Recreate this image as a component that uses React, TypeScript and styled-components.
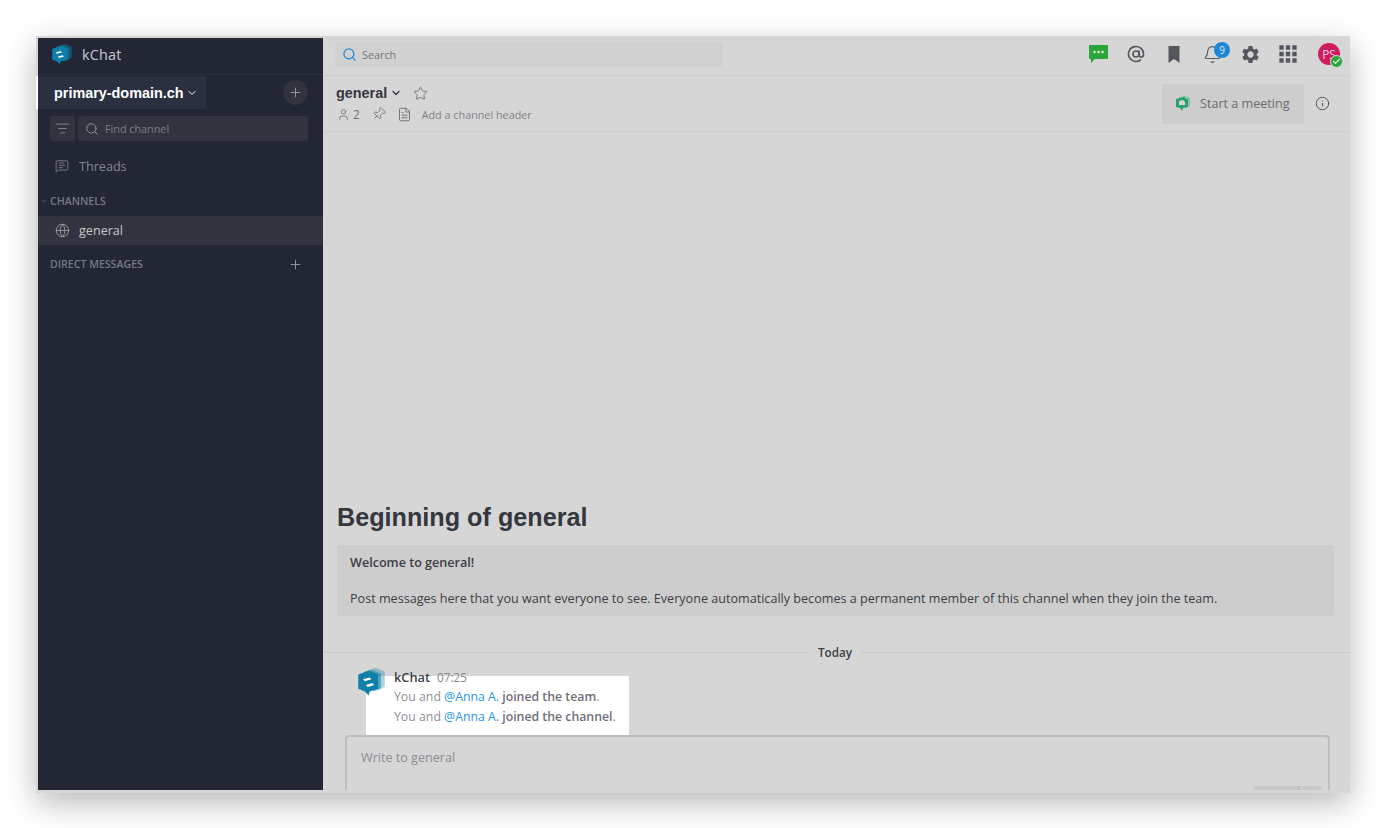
import React from "react";
import styled, { createGlobalStyle } from "styled-components";
import {
  AtSign,
  Bell,
  Check,
  ChevronDown,
  FileText,
  Globe,
  Info,
  ListFilter,
  MessageSquareText,
  Pin,
  Plus,
  Search,
  Star,
  User,
} from "lucide-react";
import { MdApps, MdSettings } from "react-icons/md";

const GlobalStyle = createGlobalStyle`
  html, body {
    margin: 0;
    background: #ffffff;
    overflow: hidden;
  }
  body {
    font-family: "Open Sans", "Noto Sans", sans-serif;
  }
`;

function KChatLogo({ size, layers }: { size: number; layers?: boolean }) {
  return (
    <svg width={size} height={size * 1.05} viewBox="0 0 28 30">
      <path d="M10 2 L19 0 L28 4 L28 20 L20 23 Z" fill="#0f7ea8" opacity={layers ? 0.35 : 0.45} />
      <path d="M6 4 L15 2 L24 6 L24 22 L16 25 Z" fill="#0f7ea8" opacity={layers ? 0.55 : 0.7} />
      <path d="M0 7 L11 3 L21 7 L21 22 L12 25 L11 29 L7 25 L0 22 Z" fill="#0f7ea8" />
      <path d="M5 12 L12 10 L14 12 L7 14 Z" fill="#ffffff" />
      <path d="M8 18 L15 16 L17 18 L10 20 Z" fill="#ffffff" />
    </svg>
  );
}

function MeetIcon() {
  return (
    <svg width="14" height="15" viewBox="0 0 14 15">
      <path d="M3 1 L9 0 L14 2 L14 10 L10 12 Z" fill="#7cc4a2" />
      <path d="M0 3 L7 1 L12 4 L12 11 L7 12 L6 15 L4 12 L0 11 Z" fill="#2f9e6e" />
      <path d="M3 5 L7 4 L9 6 L9 9 L3 9 Z" fill="#d6d6d6" />
    </svg>
  );
}

function GreenChat() {
  return (
    <svg width="19" height="18" viewBox="0 0 19 18">
      <path d="M1 0 H18 a1 1 0 0 1 1 1 V13 a1 1 0 0 1 -1 1 H6 L2 18 V14 H1 a1 1 0 0 1 -1 -1 V1 a1 1 0 0 1 1 -1 Z" fill="#2ea53c" />
      <circle cx="5.5" cy="7" r="1.2" fill="#e4f3e4" />
      <circle cx="9.5" cy="7" r="1.2" fill="#e4f3e4" />
      <circle cx="13.5" cy="7" r="1.2" fill="#e4f3e4" />
    </svg>
  );
}

function BookmarkIcon() {
  return (
    <svg width="12" height="17" viewBox="0 0 12 17">
      <path d="M0.5 0 H11.5 V17 L6 13 L0.5 17 Z" fill="#55575f" />
    </svg>
  );
}

export default function App() {
  return (
    <>
      <GlobalStyle />
      <Page>
        <Window>
          <Sidebar>
            <Brand>
              <KChatLogo size={20} />
              <BrandName>kChat</BrandName>
            </Brand>
            <TeamRow>
              <TeamName>
                primary-domain.ch
                <ChevronDown size={12} strokeWidth={2} />
              </TeamName>
              <RoundButton>
                <Plus size={15} strokeWidth={1.5} />
              </RoundButton>
            </TeamRow>
            <FilterRow>
              <FilterButton>
                <ListFilter size={15} strokeWidth={1.5} />
              </FilterButton>
              <FindChannel>
                <Search size={14} strokeWidth={1.6} />
                Find channel
              </FindChannel>
            </FilterRow>
            <NavItem>
              <MessageSquareText size={14} strokeWidth={1.5} />
              Threads
            </NavItem>
            <SectionLabel>
              <ChevronDown size={8} strokeWidth={2} />
              CHANNELS
            </SectionLabel>
            <ChannelItem>
              <Globe size={15} strokeWidth={1.5} />
              general
            </ChannelItem>
            <DirectLabel>
              DIRECT MESSAGES
              <Plus size={15} strokeWidth={1.5} />
            </DirectLabel>
          </Sidebar>
          <Main>
            <TopBar>
              <SearchBox>
                <Search size={15} strokeWidth={2} color="#1c87d6" />
                Search
              </SearchBox>
              <TopIcons>
                <TopIcon>
                  <GreenChat />
                </TopIcon>
                <TopIcon>
                  <AtSign size={18} strokeWidth={2.2} />
                </TopIcon>
                <TopIcon>
                  <BookmarkIcon />
                </TopIcon>
                <TopIcon>
                  <Bell size={19} strokeWidth={1.4} />
                  <Badge>9</Badge>
                </TopIcon>
                <TopIcon>
                  <MdSettings size={21} />
                </TopIcon>
                <TopIcon>
                  <MdApps size={26} />
                </TopIcon>
                <Avatar>
                  PS
                  <StatusDot>
                    <Check size={9} strokeWidth={3} />
                  </StatusDot>
                </Avatar>
              </TopIcons>
            </TopBar>
            <ChannelHeader>
              <ChannelInfo>
                <ChannelTitle>
                  general
                  <ChevronDown size={12} strokeWidth={2.4} />
                  <Star size={15} strokeWidth={1.4} color="#6b6d74" />
                </ChannelTitle>
                <ChannelMeta>
                  <MetaItem>
                    <User size={13} strokeWidth={1.5} />2
                  </MetaItem>
                  <TiltedPin size={14} strokeWidth={1.5} />
                  <FileText size={15} strokeWidth={1.5} />
                  <HeaderHint>Add a channel header</HeaderHint>
                </ChannelMeta>
              </ChannelInfo>
              <MeetingButton>
                <MeetIcon />
                Start a meeting
              </MeetingButton>
              <InfoButton>
                <Info size={15} strokeWidth={1.5} />
              </InfoButton>
            </ChannelHeader>
            <Feed>
              <Beginning>Beginning of general</Beginning>
              <IntroBox>
                <strong>Welcome to general!</strong>
                <p>Post messages here that you want everyone to see. Everyone automatically becomes a permanent member of this channel when they join the team.</p>
              </IntroBox>
              <DateDivider>
                <span>Today</span>
              </DateDivider>
              <Message>
                <Spotlight />
                <MessageAvatar>
                  <KChatLogo size={27} layers />
                </MessageAvatar>
                <MessageBody>
                  <MessageHead>
                    <b>kChat</b>
                    <time>07:25</time>
                  </MessageHead>
                  <SystemLine>
                    You and <a>@Anna A.</a> <em>joined the team</em>.
                  </SystemLine>
                  <SystemLine>
                    You and <a>@Anna A.</a> <em>joined the channel</em>.
                  </SystemLine>
                </MessageBody>
              </Message>
            </Feed>
            <Composer>
              <Placeholder>Write to general</Placeholder>
              <ComposerActions>
                <SendGroup />
              </ComposerActions>
            </Composer>
          </Main>
        </Window>
      </Page>
    </>
  );
}

const Page = styled.div`
  width: 1385px;
  height: 828px;
  padding: 36px 0 0 36px;
  box-sizing: border-box;
`;

const Window = styled.div`
  width: 1314px;
  height: 757px;
  box-sizing: border-box;
  padding: 2px 0 3px 2px;
  display: flex;
  background: #d6d6d6;
  box-shadow: 0 10px 30px rgba(0, 0, 0, 0.28);
`;

const Sidebar = styled.aside`
  width: 285px;
  flex: none;
  background: #232735;
  display: flex;
  flex-direction: column;
`;

const Brand = styled.div`
  height: 37px;
  box-sizing: border-box;
  border-bottom: 1px solid #2c303d;
  display: flex;
  align-items: center;
  gap: 10px;
  padding: 0 14px 3px;
`;

const BrandName = styled.span`
  color: #c9cacd;
  font-size: 14.4px;
  letter-spacing: 0.2px;
`;

const TeamRow = styled.div`
  height: 33px;
  margin-top: 1px;
  display: flex;
  align-items: center;
  justify-content: space-between;
  padding-right: 15px;
`;

const TeamName = styled.div`
  width: 170px;
  height: 33px;
  margin-left: -2px;
  box-sizing: border-box;
  padding-left: 16px;
  display: flex;
  align-items: center;
  gap: 2px;
  background: #2a3040;
  border-left: 2px solid #ffffff;
  color: #ffffff;
  white-space: nowrap;
  font: 700 14.4px "Liberation Sans", Arial, sans-serif;
`;

const RoundButton = styled.div`
  width: 25px;
  height: 25px;
  border-radius: 50%;
  background: #31343f;
  color: #9a9ca3;
  display: flex;
  align-items: center;
  justify-content: center;
`;

const FilterRow = styled.div`
  display: flex;
  gap: 3px;
  margin: 7px 15px 0 12px;
  height: 25px;
`;

const FilterButton = styled.div`
  width: 25px;
  background: #31343f;
  border-radius: 3px;
  color: #85878f;
  display: flex;
  align-items: center;
  justify-content: center;
`;

const FindChannel = styled.div`
  flex: 1;
  background: #31343f;
  border-radius: 3px;
  color: #7d7f88;
  font-size: 10.8px;
  display: flex;
  align-items: center;
  gap: 6px;
  padding-left: 7px;
  svg {
    color: #9a9ca3;
  }
`;

const NavItem = styled.div`
  height: 30px;
  margin-top: 10px;
  padding-left: 17px;
  display: flex;
  align-items: center;
  gap: 10px;
  color: #83858d;
  font-size: 12.6px;
`;

const SectionLabel = styled.div`
  height: 20px;
  margin-top: 10px;
  padding-left: 2px;
  display: flex;
  align-items: center;
  gap: 2px;
  color: #767983;
  font-size: 10.6px;
  font-weight: 600;
`;

const ChannelItem = styled.div`
  height: 29px;
  margin-top: 5px;
  padding-left: 17px;
  display: flex;
  align-items: center;
  gap: 9px;
  background: #31343f;
  color: #c6c7ca;
  font-size: 12.6px;
  svg {
    color: #9a9ca3;
  }
`;

const DirectLabel = styled.div`
  height: 20px;
  margin-top: 9px;
  padding: 0 20px 0 12px;
  display: flex;
  align-items: center;
  justify-content: space-between;
  color: #767983;
  font-size: 10.6px;
  font-weight: 600;
  svg {
    color: #9a9ca3;
  }
`;

const Main = styled.main`
  flex: 1;
  min-width: 0;
  display: flex;
  flex-direction: column;
  overflow: hidden;
`;

const TopBar = styled.header`
  height: 38px;
  flex: none;
  box-sizing: border-box;
  border-bottom: 1px solid #cdcdcd;
  display: flex;
  align-items: center;
  justify-content: space-between;
  padding: 0 10px 5px 12px;
`;

const SearchBox = styled.div`
  width: 388px;
  height: 25px;
  box-sizing: border-box;
  border-radius: 3px;
  background: #d1d1d1;
  color: #75767a;
  font-size: 10.8px;
  display: flex;
  align-items: center;
  gap: 5px;
  padding-left: 7px;
`;

const TopIcons = styled.div`
  display: flex;
  align-items: center;
  gap: 18px;
`;

const TopIcon = styled.div`
  width: 20px;
  height: 24px;
  position: relative;
  color: #55575f;
  display: flex;
  align-items: center;
  justify-content: center;
  svg {
    flex: none;
  }
`;

const Badge = styled.span`
  position: absolute;
  top: 0;
  right: -8px;
  width: 16px;
  height: 16px;
  border-radius: 50%;
  background: #1c87d6;
  color: #d9e9f5;
  font-size: 10px;
  display: flex;
  align-items: center;
  justify-content: center;
`;

const Avatar = styled.div`
  width: 22px;
  height: 22px;
  margin-left: 2px;
  border-radius: 50%;
  background: #d01c5e;
  color: #ecd3dd;
  font-size: 11.7px;
  position: relative;
  display: flex;
  align-items: center;
  justify-content: center;
`;

const StatusDot = styled.span`
  position: absolute;
  right: -3px;
  bottom: -3px;
  width: 13px;
  height: 13px;
  border-radius: 50%;
  background: #2ea53c;
  border: 1px solid #d6d6d6;
  box-sizing: border-box;
  color: #e4f3e4;
  display: flex;
  align-items: center;
  justify-content: center;
`;

const ChannelHeader = styled.div`
  height: 56px;
  flex: none;
  box-sizing: border-box;
  border-bottom: 1px solid #cdcdcd;
  padding: 0 20px 0 13px;
  display: flex;
  align-items: center;
`;

const ChannelInfo = styled.div`
  flex: 1;
  display: flex;
  flex-direction: column;
  gap: 5px;
`;

const ChannelTitle = styled.div`
  display: flex;
  align-items: center;
  gap: 3px;
  color: #35373f;
  font: 700 14.4px "Liberation Sans", Arial, sans-serif;
  svg:last-child {
    margin-left: 8px;
  }
`;

const ChannelMeta = styled.div`
  display: flex;
  align-items: center;
  gap: 11px;
  color: #6d6f76;
  font-size: 11.7px;
  margin-left: 1px;
`;

const MetaItem = styled.span`
  display: flex;
  align-items: center;
  gap: 3px;
  margin-right: 1px;
`;

const TiltedPin = styled(Pin)`
  transform: rotate(45deg);
`;

const HeaderHint = styled.span`
  color: #808187;
  font-size: 10.8px;
  margin-left: -1px;
`;

const MeetingButton = styled.div`
  width: 142px;
  height: 40px;
  box-sizing: border-box;
  padding-left: 14px;
  border-radius: 3px;
  background: #cdcdcd;
  color: #696a70;
  font-size: 12.6px;
  display: flex;
  align-items: center;
  gap: 10px;
`;

const InfoButton = styled.div`
  margin-left: 11px;
  color: #4d4f57;
  display: flex;
`;

const Feed = styled.section`
  flex: 1;
  min-height: 0;
  display: flex;
  flex-direction: column;
  justify-content: flex-end;
`;

const Beginning = styled.h1`
  margin: 0 16px 13px 14px;
  color: #35373f;
  font: 700 25.2px/30px "Liberation Sans", Arial, sans-serif;
`;

const IntroBox = styled.div`
  margin: 0 16px 0 14px;
  height: 71px;
  box-sizing: border-box;
  padding: 9px 13px;
  background: #cdcdcd;
  border-radius: 3px;
  color: #3c3e46;
  font-size: 12.6px;
  line-height: 18px;
  strong {
    font-weight: 600;
  }
  p {
    margin: 18px 0 0;
  }
`;

const DateDivider = styled.div`
  height: 18px;
  margin-top: 27px;
  position: relative;
  display: flex;
  justify-content: center;
  padding-right: 3px;
  &::before {
    content: "";
    position: absolute;
    left: 0;
    right: 0;
    top: 9px;
    border-top: 1px solid #c9c9c9;
  }
  span {
    position: relative;
    padding: 0 9px;
    background: #d6d6d6;
    color: #3c3e46;
    font-size: 11.7px;
    font-weight: 600;
    line-height: 18px;
  }
`;

const Message = styled.div`
  height: 68px;
  margin-top: 6px;
  position: relative;
  display: flex;
  padding: 1px 0 0 35px;
  box-sizing: border-box;
`;

const Spotlight = styled.div`
  position: absolute;
  left: 43px;
  top: 9px;
  bottom: 0;
  width: 263px;
  background: #ffffff;
`;

const MessageAvatar = styled.div`
  position: relative;
  width: 36px;
  flex: none;
`;

const MessageBody = styled.div`
  position: relative;
  font-size: 12.6px;
`;

const MessageHead = styled.div`
  height: 18px;
  display: flex;
  align-items: center;
  gap: 7px;
  b {
    color: #3f4149;
    font-size: 12.8px;
    font-weight: 600;
  }
  time {
    color: #85868b;
    font-size: 11.7px;
  }
`;

const SystemLine = styled.div`
  height: 19.5px;
  margin-top: 0.5px;
  line-height: 20px;
  font-size: 12.3px;
  color: #909196;
  a {
    color: #2996e8;
  }
  em {
    font-style: normal;
    font-weight: 600;
    color: #6f7076;
  }
`;

const Composer = styled.div`
  height: 55px;
  flex: none;
  margin: 0 20px 0 22px;
  box-sizing: border-box;
  border: 2px solid #bdbdbd;
  border-bottom: 0;
  border-radius: 4px 4px 0 0;
  padding: 12px 0 0 14px;
  display: flex;
  flex-direction: column;
`;

const Placeholder = styled.div`
  color: #8c8d91;
  font-size: 12.6px;
  line-height: 18px;
`;

const ComposerActions = styled.div`
  margin-top: 19px;
  display: flex;
  justify-content: flex-end;
  padding-right: 6px;
`;

const SendGroup = styled.div`
  width: 69px;
  height: 10px;
  border-radius: 4px 4px 0 0;
  background: linear-gradient(to right, #c9c9c9 45px, #b4b4b4 45px, #b4b4b4 46px, #c9c9c9 46px);
`;
